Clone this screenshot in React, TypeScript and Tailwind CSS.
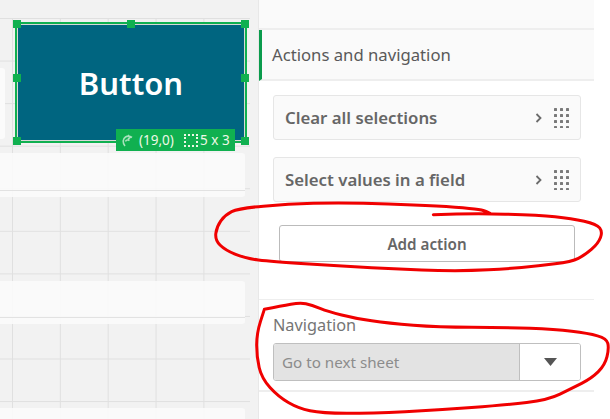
import React from 'react'

// turn traced points into a smooth hand drawn line
function smooth(points: number[][]) {
  let d = `M${points[0][0]} ${points[0][1]}`
  for (let i = 1; i < points.length - 1; i++) {
    const mx = (points[i][0] + points[i + 1][0]) / 2
    const my = (points[i][1] + points[i + 1][1]) / 2
    d += ` Q${points[i][0]} ${points[i][1]} ${mx} ${my}`
  }
  const last = points[points.length - 1]
  return d + ` L${last[0]} ${last[1]}`
}

const circleOne = [
  [685, 44], [800, 40], [1000, 45], [1100, 55], [1175, 72], [1193, 95], [1180, 130], [1140, 165], [1100, 185],
  [1000, 198], [900, 207], [800, 212], [700, 212], [600, 208], [400, 198], [200, 185], [120, 175], [60, 150],
  [30, 120], [35, 80], [60, 45], [100, 25], [250, 12], [400, 8], [550, 12], [700, 18], [800, 25], [840, 32], [855, 40],
]

const circleTwo = [
  [178, 328], [230, 318], [285, 308], [320, 315], [370, 335], [450, 355], [550, 370], [700, 382], [900, 382],
  [1050, 388], [1150, 400], [1205, 415], [1212, 445], [1200, 495], [1160, 535], [1100, 565], [1030, 600],
  [900, 615], [700, 630], [500, 640], [350, 640], [280, 625], [220, 590], [170, 535], [155, 470], [155, 400], [178, 328],
]

function Handle({ className }: { className: string }) {
  return <span className={`absolute h-2 w-2 bg-[#10b050] ${className}`} />
}

function GripIcon() {
  const spots = [0, 1, 2, 3]
  return (
    <svg width="15" height="20" viewBox="0 0 15 20" fill="#7a7a7a">
      {spots.map((row) =>
        [0, 1, 2].map((col) => <rect key={`${row}-${col}`} x={col * 6} y={row * 6} width="3" height="3" rx="0.5" />),
      )}
    </svg>
  )
}

function ActionCard({ label }: { label: string }) {
  return (
    <div className="flex h-[45px] items-center rounded-[3px] border border-[#e6e6e6] bg-[#fafafa] px-[11px]">
      <span className="flex-1 text-[16.8px] font-semibold text-[#666666]">{label}</span>
      <svg width="8" height="12" viewBox="0 0 8 12" fill="none" stroke="#6b6b6b" strokeWidth="1.8" className="mr-[11px]">
        <path d="M1.5 2l4 4-4 4" />
      </svg>
      <GripIcon />
    </div>
  )
}

function Canvas() {
  return (
    <div className="relative h-full w-[258px] shrink-0 overflow-hidden bg-[#f2f2f2]">
      {/* grid lines of the sheet */}
      <div className="absolute bottom-0 left-0 top-[18px] w-[250px] bg-[linear-gradient(to_right,#e0e0e0_1px,transparent_1px),linear-gradient(to_bottom,#e0e0e0_1px,transparent_1px)] bg-[size:47.85px_42.57px] bg-[position:12px_0]" />

      <div className="relative flex flex-col">
        <div className="flex items-start pt-[22px]">
          <div className="mt-[46px] h-[71px] w-[5px] rounded-r-[3px] bg-[#fbfbfb]" />
          <div className="relative ml-[10px] h-[121px] w-[232px] border-2 border-[#10b050]">
            <div className="flex h-full items-center justify-center rounded-[4px] border border-[#d8d8d8] bg-[#006580] pt-[2px]">
              <span className="text-[31px] font-semibold text-white">Button</span>
            </div>
            <Handle className="-left-[4px] -top-[4px]" />
            <Handle className="left-[110px] -top-[4px]" />
            <Handle className="-right-[4px] -top-[4px]" />
            <Handle className="-left-[4px] top-[50px]" />
            <Handle className="-right-[4px] top-[50px]" />
            <Handle className="-bottom-[4px] -left-[4px]" />
            <Handle className="-bottom-[4px] -right-[4px]" />
            <div className="absolute -bottom-[10px] left-[99px] flex h-[22px] w-[119px] items-center bg-[#10b050] pl-[5px] text-[13.5px] text-[#eef8e6]">
              <svg width="13" height="13" viewBox="0 0 13 13" fill="none" stroke="#a9e2bc" strokeWidth="1.6">
                <path d="M4 12C1.5 9 1.5 5 4.5 3 6.5 1.8 9 2 11 3.5M4.5 7.5C5 6 7 5.5 8.5 6.5M7 1l2 2.5L7 5" />
              </svg>
              <span className="ml-[5px] w-[40px]">(19,0)</span>
              <span className="ml-[5px] h-[13px] w-[14px] border-2 border-dotted border-[#eef8e6]" />
              <span className="ml-[2px]">5 x 3</span>
            </div>
          </div>
        </div>

        <div className="mt-[10px] h-[44px] w-[245px] rounded-r-[3px] bg-[#fbfbfb]/90">
          <div className="h-[38px] border-b border-[#e2e2e2]" />
        </div>
        <div className="mt-[84px] h-[43px] w-[245px] rounded-r-[3px] bg-[#fbfbfb]/90">
          <div className="h-[37px] border-b border-[#e2e2e2]" />
        </div>
        <div className="mt-[84px] h-[40px] w-[245px] rounded-tr-[3px] bg-[#fbfbfb]/90" />
      </div>
    </div>
  )
}

function Panel() {
  return (
    <div className="flex w-[336px] shrink-0 flex-col border-l border-[#e8e8e8] bg-white text-[#595959]">
      <div className="h-[30px] border-b-2 border-[#eeeeee] bg-[#fafafa]" />
      <div className="flex h-[51px] items-center border-b-2 border-l-[3px] border-b-[#eeeeee] border-l-[#0a9b4c] bg-[#fafafa] pl-[10px] text-[16.7px]">
        Actions and navigation
      </div>

      <div className="flex flex-col gap-[17px] pl-[14px] pr-[13px] pt-[14px]">
        <ActionCard label="Clear all selections" />
        <ActionCard label="Select values in a field" />
      </div>

      <div className="h-[98px] border-b border-[#eeeeee] px-[20px] pt-[23px]">
        <button className="h-[37px] w-[296px] rounded-[3px] border border-[#bbbbbb] bg-white pt-[1px] text-[15.2px] font-semibold text-[#666666]">
          Add action
        </button>
      </div>

      <div className="h-[92px] border-b-2 border-[#eeeeee] px-[14px] pt-[14px]">
        <div className="text-[16.3px] leading-[22px] text-[#757575]">Navigation</div>
        <div className="mt-[7px] flex h-[38px] w-[308px] overflow-hidden rounded-[3px] border border-[#bfbfbf]">
          <div className="flex flex-1 items-center border-r border-[#bfbfbf] bg-[#e3e3e3] pl-[8px] text-[15.2px] text-[#8c8c8c]">
            Go to next sheet
          </div>
          <div className="flex w-[60px] items-center justify-center bg-white">
            <svg width="13" height="8" viewBox="0 0 13 8" fill="#555555">
              <path d="M0 0h13L6.5 8z" />
            </svg>
          </div>
        </div>
      </div>
    </div>
  )
}

export default function App() {
  return (
    <div className="relative flex h-[419px] w-[610px] overflow-hidden bg-white font-['Noto_Sans',sans-serif]">
      <Canvas />
      <Panel />

      {/* red marker circles drawn on the screenshot */}
      <svg className="absolute left-[205px] top-[200px] h-[219px] w-[405px]" viewBox="0 0 1215 657" fill="none" stroke="#f00000" strokeWidth="9" strokeLinecap="round">
        <path d={smooth(circleOne)} />
        <path d={smooth(circleTwo)} />
      </svg>
    </div>
  )
}
